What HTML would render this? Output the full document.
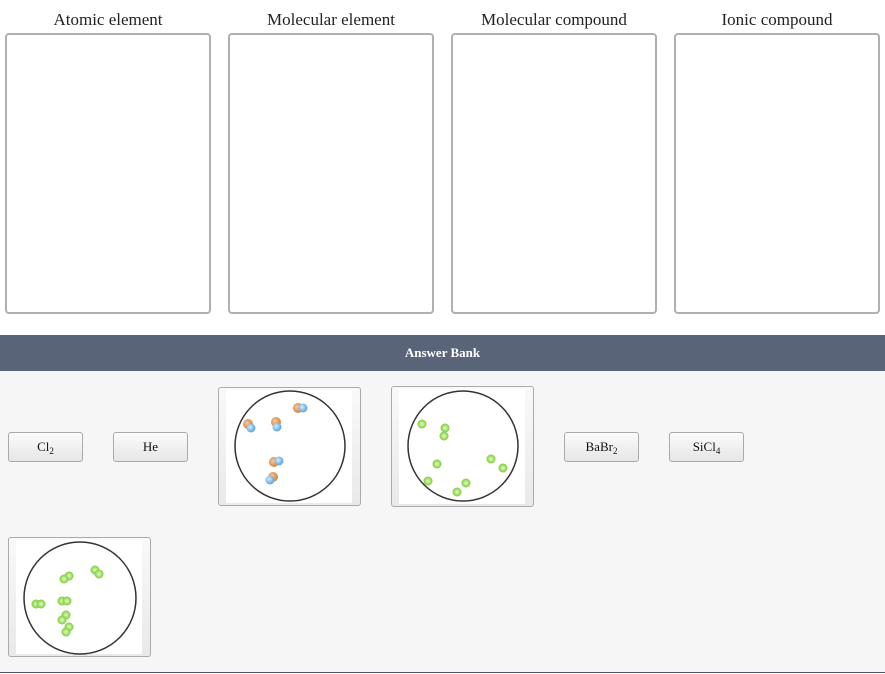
<!DOCTYPE html>
<html><head><style>
body{margin:0;width:885px;height:674px;background:#fff;font-family:"Liberation Serif",serif;position:relative;overflow:hidden}
.t{position:absolute;top:10px;width:206px;text-align:center;font-size:17px;color:#222}
.b{position:absolute;top:33px;width:202px;height:277px;border:2px solid #b0b0b0;border-radius:4px;background:#fff}
.bank{position:absolute;top:335px;left:0;width:885px;height:36px;background:#5a6479;color:#fff;font-weight:bold;font-size:13px;text-align:center;line-height:36px}
.area{position:absolute;top:371px;left:0;width:885px;height:301px;background:#f6f6f6;border-bottom:1px solid #4a5470}
.btn{position:absolute;top:432px;width:73px;height:28px;border:1px solid #aaa;border-radius:3px;background:linear-gradient(#fbfbfb,#e6e6e6);font-size:13px;text-align:center;line-height:27px;color:#111}
sub{font-size:9px;vertical-align:-3px;line-height:0}
.tile{position:absolute;border:1px solid #aaa;border-radius:3px;background:linear-gradient(#f9f9f9,#e9e9e9)}
svg{position:absolute;left:0;top:0}
</style></head><body>
<div class="t" style="left:5px">Atomic element</div>
<div class="t" style="left:228px">Molecular element</div>
<div class="t" style="left:451px">Molecular compound</div>
<div class="t" style="left:674px">Ionic compound</div>
<div class="b" style="left:5px"></div>
<div class="b" style="left:228px"></div>
<div class="b" style="left:451px"></div>
<div class="b" style="left:674px"></div>
<div class="bank">Answer Bank</div>
<div class="area"></div>
<div class="btn" style="left:8px">Cl<sub>2</sub></div>
<div class="btn" style="left:113px">He</div>
<div class="btn" style="left:564px">BaBr<sub>2</sub></div>
<div class="btn" style="left:669px">SiCl<sub>4</sub></div>
<div class="tile" style="left:218px;top:387px;width:141px;height:117px"></div>
<div class="tile" style="left:391px;top:386px;width:141px;height:119px"></div>
<div class="tile" style="left:8px;top:537px;width:141px;height:118px"></div>
<svg width="885" height="674">
<defs>
<radialGradient id="o" cx="40%" cy="40%"><stop offset="0" stop-color="#f6c9a0"/><stop offset="1" stop-color="#e08a45"/></radialGradient>
<radialGradient id="u" cx="40%" cy="40%"><stop offset="0" stop-color="#d8ecfa"/><stop offset="1" stop-color="#6aaee0"/></radialGradient>
<radialGradient id="g" cx="50%" cy="50%"><stop offset="0" stop-color="#e6f8cc"/><stop offset="0.5" stop-color="#b0e57a"/><stop offset="1" stop-color="#7ccc3a"/></radialGradient>
</defs>
<rect x="226" y="390" width="126" height="113" fill="#fff"/>
<rect x="399" y="389" width="126" height="115" fill="#fff"/>
<rect x="16" y="540" width="126" height="114" fill="#fff"/>
<circle cx="290" cy="446" r="55" fill="#fff" stroke="#333" stroke-width="1.5"/>
<circle cx="463" cy="446" r="55" fill="#fff" stroke="#333" stroke-width="1.5"/>
<circle cx="80" cy="598" r="56" fill="#fff" stroke="#333" stroke-width="1.5"/>
<g>
<circle cx="248" cy="424" r="5" fill="url(#o)"/><circle cx="251" cy="428" r="4.5" fill="url(#u)"/>
<circle cx="276" cy="422" r="5" fill="url(#o)"/><circle cx="277" cy="427" r="4.5" fill="url(#u)"/>
<circle cx="298" cy="408" r="5" fill="url(#o)"/><circle cx="303" cy="408" r="4.5" fill="url(#u)"/>
<circle cx="274" cy="462" r="5" fill="url(#o)"/><circle cx="279" cy="461" r="4.5" fill="url(#u)"/>
<circle cx="273" cy="477" r="5" fill="url(#o)"/><circle cx="270" cy="480" r="4.5" fill="url(#u)"/>
</g>
<g fill="url(#g)">
<circle cx="422" cy="424" r="4.5"/><circle cx="445" cy="428" r="4.5"/><circle cx="444" cy="436" r="4.5"/>
<circle cx="437" cy="464" r="4.5"/><circle cx="428" cy="481" r="4.5"/><circle cx="491" cy="459" r="4.5"/>
<circle cx="503" cy="468" r="4.5"/><circle cx="466" cy="483" r="4.5"/><circle cx="457" cy="492" r="4.5"/>
<circle cx="69" cy="576" r="4.5"/><circle cx="64" cy="579" r="4.5"/>
<circle cx="95" cy="570" r="4.5"/><circle cx="99" cy="574" r="4.5"/>
<circle cx="36" cy="604" r="4.5"/><circle cx="41" cy="604" r="4.5"/>
<circle cx="62" cy="601" r="4.5"/><circle cx="67" cy="601" r="4.5"/>
<circle cx="66" cy="615" r="4.5"/><circle cx="62" cy="620" r="4.5"/>
<circle cx="69" cy="627" r="4.5"/><circle cx="66" cy="632" r="4.5"/>
</g>
</svg>
</body></html>
